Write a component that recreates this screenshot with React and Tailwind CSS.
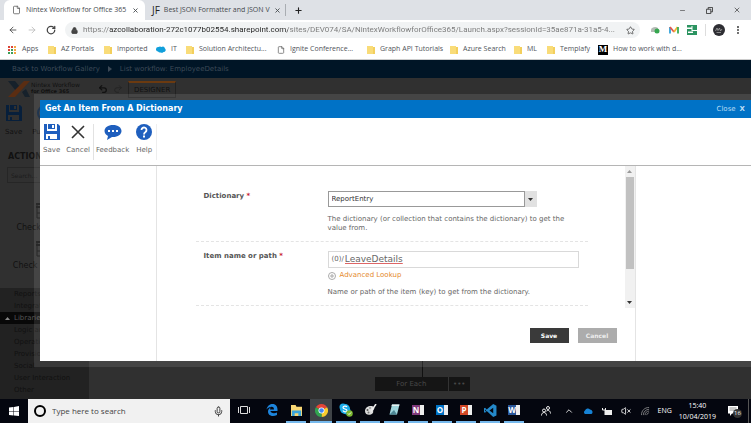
import React, { useState } from 'react';
import { ArrowLeft, ArrowRight, RotateCw, Lock, Star, X, Plus, Minus, File, Undo2, Redo2, ChevronUp, Mic, VolumeX, MoreVertical } from 'lucide-react';

const bookmarks = [
  { label: 'AZ Portals', icon: 'folder', width: 'w-[56px]' },
  { label: 'Imported', icon: 'folder', width: 'w-[52px]' },
  { label: 'IT', icon: 'cloud', width: 'w-[30px]' },
  { label: 'Solution Architectu...', icon: 'folder', width: 'w-[91px]' },
  { label: 'Ignite Conference...', icon: 'file', width: 'w-[90px]' },
  { label: 'Graph API Tutorials', icon: 'folder', width: 'w-[83px]' },
  { label: 'Azure Search', icon: 'folder', width: 'w-[64px]' },
  { label: 'ML', icon: 'folder', width: 'w-[33px]' },
  { label: 'Templafy', icon: 'folder', width: 'w-[51px]' },
  { label: 'How to work with d...', icon: 'medium', width: 'w-[90px]' },
];

const categories = ['Reports', 'Integration', 'Libraries and lists', 'Logic and flow', 'Operations', 'Provisioning', 'Social', 'User Interaction', 'Other'];

function BookmarkIcon({ type }) {
  if (type === 'file') return <File className="h-[10px] w-[8px] shrink-0 text-[#555]" strokeWidth={2} />;
  if (type === 'cloud') {
    return (
      <svg viewBox="0 0 20 14" className="h-[7px] w-[10px] shrink-0">
        <path d="M5 2a5 5 0 0 1 6 0 5 5 0 0 1 7 3 4 4 0 0 1-3 7 5 5 0 0 1-6 1 5 5 0 0 1-5-2A4.500 4.500 0 0 1 5 2z" fill="#119fdb" />
      </svg>
    );
  }
  if (type === 'medium') {
    return (
      <span className="flex h-[10px] w-[10px] shrink-0 items-center justify-center bg-black font-['Liberation_Serif',serif] text-[9px] font-bold leading-none text-white">
        M
      </span>
    );
  }
  return (
    <svg viewBox="0 0 8 9" className="h-[9px] w-[8px] shrink-0">
      <path d="M0 1h6v1h2v7H0z" fill="#f9dc79" />
      <path d="M6 2h2v7H6z" fill="#f3cf5d" />
    </svg>
  );
}

function TabStrip() {
  return (
    <div className="flex h-5 items-stretch bg-[#dee1e6] text-[7px] text-[#45494d]">
      <div className="ml-1 flex w-[141px] items-center rounded-t-md bg-white pl-2">
        <File className="mr-[5px] h-[10px] w-[9px] shrink-0 text-[#555]" />
        <button className="flex-1 whitespace-nowrap text-left">Nintex Workflow for Office 365</button>
        <button aria-label="Close tab" className="mr-[6px]"><X className="size-[7px]" strokeWidth={3} /></button>
      </div>
      <div className="my-1 flex w-[141px] items-center border-r border-[#a9adb2] pl-[7px]">
        <span className="mr-1 text-[10px] leading-none text-[#222]">JF</span>
        <button className="flex-1 whitespace-nowrap text-left">Best JSON Formatter and JSON V</button>
        <button aria-label="Close tab" className="mr-1"><X className="size-[7px]" strokeWidth={3} /></button>
      </div>
      <button aria-label="New tab" className="ml-2"><Plus className="size-[9px] text-[#222]" strokeWidth={3} /></button>
      <div className="ml-auto flex items-center gap-5 pr-[10px] text-[#333]">
        <button aria-label="Minimize"><Minus className="size-[7px]" /></button>
        <button aria-label="Restore">
          <svg viewBox="0 0 8 8" className="size-[7px]" fill="none" stroke="currentColor">
            <path d="M.5 2.500h5v5h-5zM2.500 2.500v-2h5v5h-2" />
          </svg>
        </button>
        <button aria-label="Close"><X className="size-[8px]" /></button>
      </div>
    </div>
  );
}

function AddressBar() {
  const [url, setUrl] = useState(
    'https://azcollaboration-272c1077b02554.sharepoint.com/sites/DEV074/SA/NintexWorkflowforOffice365/Launch.aspx?sessionId=35ae871a-31a5-4...'
  );
  return (
    <div className="flex h-5 items-center bg-white pl-2 pr-2 text-[#444]">
      <button aria-label="Back" className="mr-[9px]"><ArrowLeft className="size-[10px]" /></button>
      <button aria-label="Forward" className="mr-[9px]"><ArrowRight className="size-[10px] text-[#bbb]" /></button>
      <button aria-label="Reload" className="mr-[9px]"><RotateCw className="size-[10px]" strokeWidth={3} /></button>
      <div className="flex h-4 flex-1 items-center rounded-full bg-[#f1f3f4] pl-[6px] pr-[5px]">
        <Lock className="mr-[5px] size-[7px] shrink-0 fill-[#444]" strokeWidth={3} />
        <input
          aria-label="Address"
          value={url}
          onChange={(e) => setUrl(e.target.value)}
          className="min-w-0 flex-1 bg-[linear-gradient(90deg,#777_27px,#222_27px,#222_205px,#777_205px)] bg-clip-text font-['Roboto',sans-serif] text-[8px] text-transparent outline-none"
        />
        <button aria-label="Bookmark"><Star className="size-[9px]" /></button>
      </div>
      <svg viewBox="0 0 10 8" className="ml-[10px] h-[8px] w-[10px]">
        <path d="M1 4a4 3 0 0 1 7-2v4H1z" fill="#b4bbb5" />
        <circle cx="7" cy="5" r="2.500" fill="#36a64f" />
      </svg>
      <svg viewBox="0 0 20 16" className="ml-[9px] h-[8px] w-[10px]" fill="none" strokeWidth="3.500">
        <path d="M2 15V2" stroke="#2a9fd8" />
        <path d="M2 2l8 10" stroke="#e2574c" />
        <path d="M10 12l7-10" stroke="#f1b434" />
        <path d="M18 2v13" stroke="#33a852" />
      </svg>
      <svg viewBox="0 0 20 20" className="ml-[8px] size-[10px]">
        <path d="M0 0h20v20H0z" fill="#2c9461" />
        <path d="M0 5h9v3H0zM9 2h2v8h9v2H9zM2 13h10v3H2z" fill="#fff" />
      </svg>
      <span className="ml-2 h-3 w-px bg-[#ddd]" />
      <svg viewBox="0 0 24 24" className="ml-[7px] size-3">
        <circle cx="12" cy="12" r="12" fill="#2e2e33" />
        <path d="M5 14l3-6 2 5 3-5 2 6 3-4M7 17h9" stroke="#aaa" fill="none" strokeWidth="1.500" />
      </svg>
      <button aria-label="Menu" className="ml-2"><MoreVertical className="size-[10px]" strokeWidth={3} /></button>
    </div>
  );
}

function BookmarksBar() {
  return (
    <nav className="flex h-5 items-center overflow-hidden border-b border-[#ccc] bg-white pl-2 text-[7px] text-[#50545a]">
      <a href="#apps" className="flex w-[40px] shrink-0 items-center gap-[6px]">
        <svg viewBox="0 0 8 8" className="size-[8px]">
          <path d="M0 0h2v2H0zM3 0h2v2H3zM0 3h2v2H0z" fill="#db4437" />
          <path d="M6 0h2v2H6zM6 3h2v2H6zM6 6h2v2H6z" fill="#f4a742" />
          <path d="M3 3h2v2H3zM0 6h2v2H0zM3 6h2v2H3z" fill="#3b9e58" />
        </svg>
        Apps
      </a>
      {bookmarks.map((b) => (
        <a key={b.label} href="#bookmark" className={`flex ${b.width} shrink-0 items-center gap-[5px] whitespace-nowrap`}>
          <BookmarkIcon type={b.icon} />
          {b.label}
        </a>
      ))}
    </nav>
  );
}

function SaveIcon({ className }) {
  return (
    <svg viewBox="0 0 16 16" className={className} fill="currentColor">
      <path fillRule="evenodd" d="M0 0h3v7h10V0h1l2 2v14H0zM2 10v5h11v-5zM4 0h7v5H4zM8 1v3h2V1z" />
      <path d="M4 12h2v3H4z" />
    </svg>
  );
}

function CalendarIcon() {
  return (
    <svg viewBox="0 0 16 16" className="size-4" fill="none" stroke="#111">
      <path d="M0 1h16M0 4h16" strokeWidth="2" />
      <path d="M1 2v13h14V2M5 5v10M10 5v10M1 10h14" />
    </svg>
  );
}

function Designer() {
  return (
    <div className="flex h-full flex-col bg-[#303030] font-['DejaVu_Sans',sans-serif] text-[7px] text-[#111]">
      <div className="flex h-[18px] shrink-0 items-center bg-[#001526] pl-3 text-[#3d4a57]">
        <a href="#gallery">Back to Workflow Gallery</a>
        <svg viewBox="0 0 4 6" className="mx-2 h-[6px] w-1" fill="currentColor"><path d="M0 0l4 3-4 3z" /></svg>
        <a href="#list">List workflow: EmployeeDetails</a>
      </div>
      <div className="flex h-5 shrink-0 items-end pl-2">
        <svg viewBox="0 0 22 17" className="h-[17px] w-[22px]">
          <path d="M0 0h7l5 6-4 4zM14 11l4-3 4 8h-5z" fill="#16212b" />
          <path d="M22 0h-6L0 16h7z" fill="#5a2d12" />
        </svg>
        <span className="flex w-[68px] flex-col self-center pl-px text-[6px] leading-[6px]">
          <span>Nintex Workflow</span>
          <b className="text-[5px]">for Office 365</b>
        </span>
        <button aria-label="Undo" className="mb-1"><Undo2 className="size-[10px]" strokeWidth={3} /></button>
        <button aria-label="Redo" className="mb-1 ml-[5px] mr-[5px]"><Redo2 className="size-[10px] text-[#222]" /></button>
        <button className="h-[17px] border border-t-2 border-[#222] border-t-[#6b3a10] px-[5px]">DESIGNER</button>
      </div>
      <div className="flex h-12 shrink-0 gap-[10px] pl-[5px] pt-[7px]">
        <button className="flex flex-col items-center gap-[7px] text-[7px] leading-[9px]">
          <SaveIcon className="size-4 text-[#071f3b]" />Save
        </button>
        <button className="flex flex-col items-center gap-[7px] text-[7px] leading-[9px]">
          <span className="size-4 rounded-full border-2 border-[#071f3b]" />Publish
        </button>
      </div>
      <div className="flex min-h-0 flex-1">
        <aside className="w-[89px] shrink-0 overflow-hidden border-r border-[#222]">
          <h2 className="pl-2 pt-[5px] text-[8px] font-bold leading-3">ACTIONS</h2>
          <input aria-label="Search actions" placeholder="Search..." className="ml-[7px] mt-1 h-4 w-[72px] border border-[#262626] px-[3px] text-[6px] placeholder:text-[#1b1b1b]" />
          <ul className="flex flex-col gap-2 pt-5 text-[8px]">
            <li className="flex flex-col items-center gap-1 leading-[10px]"><CalendarIcon />Check In item</li>
            <li className="flex flex-col items-center gap-1 leading-[10px]"><CalendarIcon />Check Out item</li>
          </ul>
          <ul className="mt-[17px] bg-[#222] pb-2">
            {categories.map((name, i) => (
              <li key={name} className={i === 2 ? 'flex h-3 items-center gap-1 whitespace-nowrap bg-[#080808] pl-[5px] text-[#555]' : 'h-3 pl-[14px] leading-3'}>
                {i === 2 && <svg viewBox="0 0 5 3" className="h-[3px] w-[5px]" fill="#888"><path d="M0 3h5L2.500 0z" /></svg>}
                {name}
              </li>
            ))}
          </ul>
        </aside>
        <main className="flex flex-1 flex-col items-center justify-end pl-1">
          <span className="h-4 w-px bg-[#111]" />
          <div className="mb-2 flex h-[14px] w-[95px] items-center bg-[#151515] text-[#484848]">
            <span className="flex-1 text-center">For Each</span>
            <button className="h-full border-l border-[#333] px-1">•••</button>
          </div>
        </main>
      </div>
    </div>
  );
}

function RibbonButton({ label, children }) {
  return (
    <button className="flex flex-col items-center gap-[6px] leading-[9px] text-[#666]">
      {children}
      {label}
    </button>
  );
}

function Row({ label, id, children }) {
  return (
    <div className="flex border-b border-dashed border-[#e4e4e4] pl-2">
      <label htmlFor={id} className="w-[124px] shrink-0 font-bold leading-[10px] text-[#555]">
        {label} <span className="text-[#c8202f]">*</span>
      </label>
      <div className="flex-1">{children}</div>
    </div>
  );
}

function Dialog() {
  const [path, setPath] = useState('LeaveDetails');
  return (
    <section role="dialog" aria-label="Get An Item From A Dictionary" className="flex h-full flex-col bg-white font-['DejaVu_Sans',sans-serif] text-[7px] text-[#666]">
      <header className="flex h-[18px] shrink-0 items-center bg-[#0072c6] pl-[5px] pr-[6px] text-white">
        <h1 className="flex-1 text-[8px] font-bold">Get An Item From A Dictionary</h1>
        <button className="flex items-center gap-1 text-[#b9dcf5]">Close <b>X</b></button>
      </header>
      <div className="flex h-[48px] shrink-0 items-start border-b border-[#b5b5b5] pl-[3px] pt-[6px]">
        <RibbonButton label="Save"><SaveIcon className="size-4 text-[#1f5fbe]" /></RibbonButton>
        <span className="w-[6px]" />
        <RibbonButton label="Cancel">
          <svg viewBox="0 0 16 16" className="size-4" fill="none" stroke="#333" strokeWidth="1.600"><path d="M2 2l12 12M14 2L2 14" /></svg>
        </RibbonButton>
        <span className="ml-[3px] mr-[2px] h-9 w-px bg-[#e2e2e2]" />
        <RibbonButton label="Feedback">
          <svg viewBox="0 0 18 16" className="h-4 w-[18px]">
            <path d="M9 1c5 0 8.500 2.600 8.500 6S14 13 9 13l-1 0-5 3 1-4C2 11 .5 9 .5 7 .5 3.600 4 1 9 1z" fill="#1f5fbe" />
            <path d="M4 6h2v2H4zM8 6h2v2H8zM12 6h2v2h-2z" fill="#fff" />
          </svg>
        </RibbonButton>
        <span className="w-[7px]" />
        <RibbonButton label="Help">
          <svg viewBox="0 0 16 16" className="size-4">
            <circle cx="8" cy="8" r="8" fill="#1f5fbe" />
            <path d="M5.500 6a2.500 2.500 0 1 1 4 2C8.300 8.800 8 9 8 10.500" fill="none" stroke="#fff" strokeWidth="1.800" />
            <path d="M7 11.500h2v2H7z" fill="#fff" />
          </svg>
        </RibbonButton>
        <span className="mx-[4px] h-9 w-px bg-[#eee]" />
      </div>
      <div className="mx-auto flex min-h-0 w-full max-w-[480px] flex-1 flex-col border-x border-[#e4e4e4]">
        <div className="flex h-[142px] shrink-0">
          <div className="flex-1 pl-[39px] pr-[37px] pt-[25px]">
            <Row label="Dictionary" id="dictionary">
              <div className="flex h-4 w-[209px]">
                <select id="dictionary" className="min-w-0 flex-1 appearance-none border border-[#999] bg-white px-[3px] text-[#333]">
                  <option>ReportEntry</option>
                </select>
                <span className="flex w-3 items-center justify-center bg-[#e1e1e1]">
                  <svg viewBox="0 0 5 3" className="h-[3px] w-[5px]"><path d="M0 0h5L2.500 3z" fill="#333" /></svg>
                </span>
              </div>
              <p className="my-2 max-w-[251px] leading-[9px]">The dictionary (or collection that contains the dictionary) to get the value from.</p>
            </Row>
            <div className="h-[9px]" />
            <Row label="Item name or path" id="path">
              <div className="flex h-[17px] w-[251px] items-center border border-[#d9d9d9] px-[3px]">
                <span className="pr-px">(0)/</span>
                <input
                  id="path"
                  value={path}
                  onChange={(e) => setPath(e.target.value)}
                  className="min-w-0 flex-1 text-[9px] underline decoration-[#d66] outline-none"
                />
              </div>
              <a href="#lookup" className="mt-[3px] flex items-center gap-1 leading-[9px] text-[#e58a2c]">
                <svg viewBox="0 0 8 8" className="size-[8px]" fill="none" stroke="#aaa">
                  <circle cx="4" cy="4" r="3.500" />
                  <path d="M2 4h4M4 2v4" />
                </svg>
                Advanced Lookup
              </a>
              <p className="my-2 leading-[9px]">Name or path of the item (key) to get from the dictionary.</p>
            </Row>
          </div>
          <div className="flex w-[10px] shrink-0 flex-col items-center bg-[#f1f1f1]">
            <svg viewBox="0 0 5 3" className="my-[4px] h-[3px] w-[5px] shrink-0"><path d="M0 3h5L2.500 0z" fill="#999" /></svg>
            <span className="h-[92px] w-2 bg-[#c1c1c1]" />
            <svg viewBox="0 0 5 3" className="mb-[4px] mt-auto h-[3px] w-[5px]"><path d="M0 0h5L2.500 3z" fill="#333" /></svg>
          </div>
        </div>
        <div className="flex justify-end gap-[9px] pr-[18px] pt-5 font-bold">
          <button className="h-[15px] w-[39px] bg-[#3a3a3a] text-[6px] text-white">Save</button>
          <button className="h-[15px] w-[39px] bg-[#acacac] text-[6px] text-[#eee]">Cancel</button>
        </div>
      </div>
    </section>
  );
}

function OfficeIcon({ letter, className }) {
  return (
    <span className={`flex h-[10px] w-3 border-r-4 border-[#eee] ${className}`}>
      <span className="w-2 text-center text-[8px] font-bold leading-[10px] text-white">{letter}</span>
    </span>
  );
}

function AppButton({ label, active, running = true, children }) {
  return (
    <button
      aria-label={label}
      className={`flex h-full items-center justify-center border-b-2 ${active ? 'w-[22px] bg-[#3f4347]' : 'w-5'} ${running ? 'border-[#76b9ed]' : 'border-transparent'}`}
    >
      {children}
    </button>
  );
}

function Taskbar() {
  return (
    <footer className="flex h-6 shrink-0 items-center bg-[#04060f] text-[7px] text-white">
      <button aria-label="Start" className="flex w-7 justify-center">
        <svg viewBox="0 0 20 20" className="size-[10px]"><path d="M0 3l9-1v8H0zM10 2l10-2v10H10zM0 11h9v8l-9-1zM10 11h10v9l-10-1z" fill="#fff" /></svg>
      </button>
      <div className="flex h-full w-[202px] items-center bg-[#f1f1f1] pl-[6px] pr-[6px]">
        <span className="mr-[6px] size-3 shrink-0 rounded-full border-2 border-black" />
        <input aria-label="Search" placeholder="Type here to search" className="min-w-0 flex-1 text-[8px] placeholder:text-[#444]" />
        <Mic className="size-[11px] text-[#333]" />
      </div>
      <div className="flex h-full items-center gap-1 pl-1">
        <AppButton label="Task view" running={false}>
          <svg viewBox="0 0 12 10" className="h-[10px] w-3" fill="none" stroke="#ddd"><path d="M2.500 1.500h7v7h-7zM.5 2v6M11.500 2v6" /></svg>
        </AppButton>
        <span className="w-0" />
        <AppButton label="Edge" running={false}>
          <svg viewBox="0 0 24 24" className="size-3" fill="#1d84dc"><path d="M1 11C3 3 8 0 13 0c7 0 10 5 10 11v3H9c0 4 7 6 13 3v5C14 26 4 24 4 15c0-4 3-7 6-8-1 1-2 2-2 4h8c0-8-10-6-15 0z" /></svg>
        </AppButton>
        <AppButton label="File Explorer">
          <svg viewBox="0 0 14 12" className="h-[11px] w-[13px]"><path d="M1 0h5l1 2h6v10H1z" fill="#f8d775" /><path d="M2 6h10v6H9V9H5v3H2z" fill="#39a5dc" /></svg>
        </AppButton>
        <AppButton label="Chrome" active>
          <svg viewBox="0 0 24 24" className="size-[13px]">
            <path d="M12 12L1.600 6A12 12 0 0 1 22.400 6z" fill="#e24436" />
            <path d="M12 12L22.400 6A12 12 0 0 1 12 24z" fill="#f9cb2e" />
            <path d="M12 12v12A12 12 0 0 1 1.600 6z" fill="#31a350" />
            <circle cx="12" cy="12" r="5.500" fill="#fff" />
            <circle cx="12" cy="12" r="4.200" fill="#4285f4" />
          </svg>
        </AppButton>
        <AppButton label="Skype">
          <svg viewBox="0 0 28 28" className="size-[14px]">
            <circle cx="8" cy="8" r="7" fill="#1badea" /><circle cx="16" cy="16" r="7" fill="#1badea" /><circle cx="12" cy="12" r="10" fill="#1badea" />
            <path d="M16 8c-2-3-8-2-8 1 0 4 8 2 8 6 0 3-6 4-8 0" fill="none" stroke="#fff" strokeWidth="2.500" />
            <circle cx="21" cy="21" r="6.500" fill="#7cb82f" /><path d="M18 21l2 2 4-4" fill="none" stroke="#fff" strokeWidth="2" />
          </svg>
        </AppButton>
        <AppButton label="Paint">
          <svg viewBox="0 0 26 24" className="h-3 w-[13px]">
            <path d="M2 14C2 7 9 3 16 4c5 1 6 5 3 8-2 2 1 4-2 7-4 4-15 4-15-5z" fill="#dcdcdc" />
            <circle cx="7" cy="12" r="2" fill="#555" /><circle cx="12" cy="8" r="2" fill="#999" /><circle cx="9" cy="17" r="2" fill="#777" />
            <path d="M24 0L14 15" stroke="#eee" strokeWidth="3" />
          </svg>
        </AppButton>
        <AppButton label="Notepad">
          <svg viewBox="0 0 24 24" className="size-3"><path d="M8 1h15l-5 20H3z" fill="#9fd5dc" /><path d="M3 21l9-9 6 9z" fill="#4d8795" /><path d="M8 1h15l-1 3H7z" fill="#e7f2f3" /></svg>
        </AppButton>
        <AppButton label="OneNote"><OfficeIcon letter="N" className="bg-[#80397b]" /></AppButton>
        <AppButton label="Outlook"><OfficeIcon letter="O" className="bg-[#0072c6]" /></AppButton>
        <AppButton label="PowerPoint"><OfficeIcon letter="P" className="bg-[#d24726]" /></AppButton>
        <AppButton label="Visual Studio Code">
          <svg viewBox="0 0 24 24" className="size-[13px]"><path d="M17 0l6 3v18l-6 3L5 13l-3 3-2-1V8l2-1 3 3zm0 7l-7 5 7 5zM2 10v4l2-2z" fill="#2489ca" fillRule="evenodd" /></svg>
        </AppButton>
        <AppButton label="Word"><OfficeIcon letter="W" className="bg-[#2b579a]" /></AppButton>
      </div>
      <div className="ml-auto flex h-full items-center">
        <svg viewBox="0 0 20 20" className="mr-[13px] size-[10px]" fill="none" stroke="#eee" strokeWidth="2"><circle cx="6" cy="9" r="3" /><circle cx="14" cy="4" r="3" /><path d="M1 19c0-8 10-8 10 0M10 11c3-4 9-2 9 4" /></svg>
        <ChevronUp className="mr-[9px] size-[10px]" />
        <svg viewBox="0 0 20 12" className="mr-[9px] h-[6px] w-[10px]"><path d="M4 12a4 4 0 0 1 0-7 6 6 0 0 1 10-2 5 5 0 0 1 3 9z" fill="#1682d4" /></svg>
        <svg viewBox="0 0 20 14" className="mr-[9px] h-[7px] w-[10px]"><path d="M5 4h15v10H5z" fill="#eee" /><path d="M1 0v4h6V0" fill="none" stroke="#eee" strokeWidth="2" /></svg>
        <VolumeX className="mr-[10px] size-[10px]" />
        <svg viewBox="0 0 20 20" className="mr-[8px] size-[9px]" fill="none" stroke="#aaa" strokeWidth="1.500"><path d="M1 18C1 8 8 1 18 1M5 18C5 11 11 5 18 5M9 18c0-5 4-9 9-9M13 18c0-3 2-5 5-5" /></svg>
        <span className="mr-[7px]">ENG</span>
        <div className="mr-[12px] text-center leading-[11px]">15:40<br />10/04/2019</div>
        <button aria-label="Notifications" className="relative mr-[6px] h-[14px] w-[14px]">
          <svg viewBox="0 0 20 20" className="size-[10px]"><path d="M0 0h20v15H8l-4 5v-5H0z" fill="#fff" /><path d="M3 4h14M3 8h14" stroke="#222" /></svg>
          <span className="absolute bottom-0 right-0 flex size-[9px] items-center justify-center rounded-full bg-[#333] text-[6px]">16</span>
        </button>
        <span className="mr-[2px] h-full w-px bg-[#555]" />
      </div>
    </footer>
  );
}

export default function App() {
  return (
    <div className="flex h-screen flex-col overflow-hidden font-['Open_Sans',sans-serif]">
      <TabStrip />
      <AddressBar />
      <BookmarksBar />
      <div className="relative min-h-0 flex-1">
        <Designer />
        <div className="absolute bottom-8 left-[34px] right-0 top-[34px] bg-white/10 py-[6px] pl-[6px]">
          <Dialog />
        </div>
      </div>
      <Taskbar />
    </div>
  );
}
